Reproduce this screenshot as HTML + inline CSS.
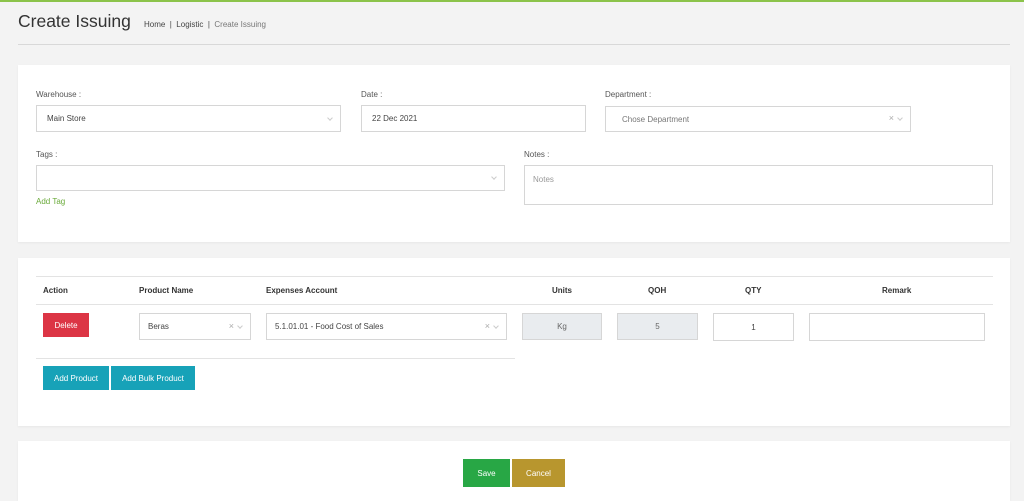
<!DOCTYPE html>
<html><head><style>
*{box-sizing:border-box;margin:0;padding:0}
body{width:1024px;height:493px;overflow:hidden;background:#f3f3f3;font-family:"Liberation Sans",sans-serif;color:#333;position:relative}
.a{position:absolute}
.card{position:absolute;left:18px;width:992px;background:#fff;box-shadow:0 1px 2px rgba(0,0,0,.05)}
.lbl{position:absolute;font-size:8px;color:#555}
.inp{position:absolute;border:1px solid #d6d6d6;background:#fff;font-size:8px;color:#444;padding-left:10px;display:flex;align-items:center}
.arr{position:absolute;right:8px;top:50%;margin-top:-3px;width:4px;height:4px;border-right:1px solid #ccc;border-bottom:1px solid #ccc;transform:rotate(45deg)}
.x{position:absolute;right:16px;top:50%;margin-top:-6px;font-size:9px;color:#aaa}
.th{position:absolute;top:286px;font-size:8px;font-weight:bold;color:#333}
.btn{position:absolute;color:#fff;font-size:8px;display:flex;align-items:center;justify-content:center}
.hl{position:absolute;height:1px;background:#e3e3e3}
</style></head><body>
<div class="a" style="left:0;top:0;width:1024px;height:2px;background:#8bc34a"></div>
<div class="a" style="left:18px;top:11px;font-size:17.5px;color:#333">Create Issuing</div>
<div class="a" style="left:144px;top:20px;font-size:8px;color:#444">Home &nbsp;|&nbsp; Logistic &nbsp;|&nbsp; <span style="color:#777">Create Issuing</span></div>
<div class="a" style="left:18px;top:44px;width:992px;height:1px;background:#d8d8d8"></div>

<div class="card" style="top:65px;height:177px"></div>
<div class="lbl" style="left:36px;top:90px">Warehouse :</div>
<div class="inp" style="left:36px;top:105px;width:305px;height:27px">Main Store<span class="arr"></span></div>
<div class="lbl" style="left:361px;top:90px">Date :</div>
<div class="inp" style="left:361px;top:105px;width:225px;height:27px">22 Dec 2021</div>
<div class="lbl" style="left:605px;top:90px">Department :</div>
<div class="inp" style="left:605px;top:106px;width:306px;height:26px;padding-left:16px;color:#777">Chose Department<span class="x">×</span><span class="arr"></span></div>
<div class="lbl" style="left:36px;top:150px">Tags :</div>
<div class="inp" style="left:36px;top:165px;width:469px;height:26px"><span class="arr"></span></div>
<div class="lbl" style="left:36px;top:197px;color:#6aaa3a">Add Tag</div>
<div class="lbl" style="left:524px;top:150px">Notes :</div>
<div class="inp" style="left:524px;top:165px;width:469px;height:40px;align-items:flex-start;padding-top:9px;padding-left:8px;color:#999">Notes</div>

<div class="card" style="top:258px;height:168px"></div>
<div class="hl" style="left:36px;top:276px;width:957px"></div>
<div class="hl" style="left:36px;top:304px;width:957px"></div>
<div class="th" style="left:43px">Action</div>
<div class="th" style="left:139px">Product Name</div>
<div class="th" style="left:266px">Expenses Account</div>
<div class="th" style="left:552px">Units</div>
<div class="th" style="left:648px">QOH</div>
<div class="th" style="left:745px">QTY</div>
<div class="th" style="left:882px">Remark</div>
<div class="btn" style="left:43px;top:313px;width:46px;height:24px;background:#dc3545">Delete</div>
<div class="inp" style="left:139px;top:313px;width:112px;height:27px;padding-left:8px">Beras<span class="x">×</span><span class="arr"></span></div>
<div class="inp" style="left:266px;top:313px;width:241px;height:27px;padding-left:8px">5.1.01.01 - Food Cost of Sales<span class="x">×</span><span class="arr"></span></div>
<div class="inp" style="left:522px;top:313px;width:80px;height:27px;background:#e9ecef;justify-content:center;padding:0;color:#666">Kg</div>
<div class="inp" style="left:617px;top:313px;width:81px;height:27px;background:#e9ecef;justify-content:center;padding:0;color:#666">5</div>
<div class="inp" style="left:713px;top:313px;width:81px;height:28px;justify-content:center;padding:0">1</div>
<div class="inp" style="left:809px;top:313px;width:176px;height:28px"></div>
<div class="hl" style="left:36px;top:358px;width:479px"></div>
<div class="btn" style="left:43px;top:366px;width:66px;height:24px;background:#17a2b8">Add Product</div>
<div class="btn" style="left:111px;top:366px;width:84px;height:24px;background:#17a2b8">Add Bulk Product</div>

<div class="card" style="top:441px;height:60px"></div>
<div class="btn" style="left:463px;top:459px;width:47px;height:28px;background:#28a745">Save</div>
<div class="btn" style="left:512px;top:459px;width:53px;height:28px;background:#b8962e">Cancel</div>
</body></html>
